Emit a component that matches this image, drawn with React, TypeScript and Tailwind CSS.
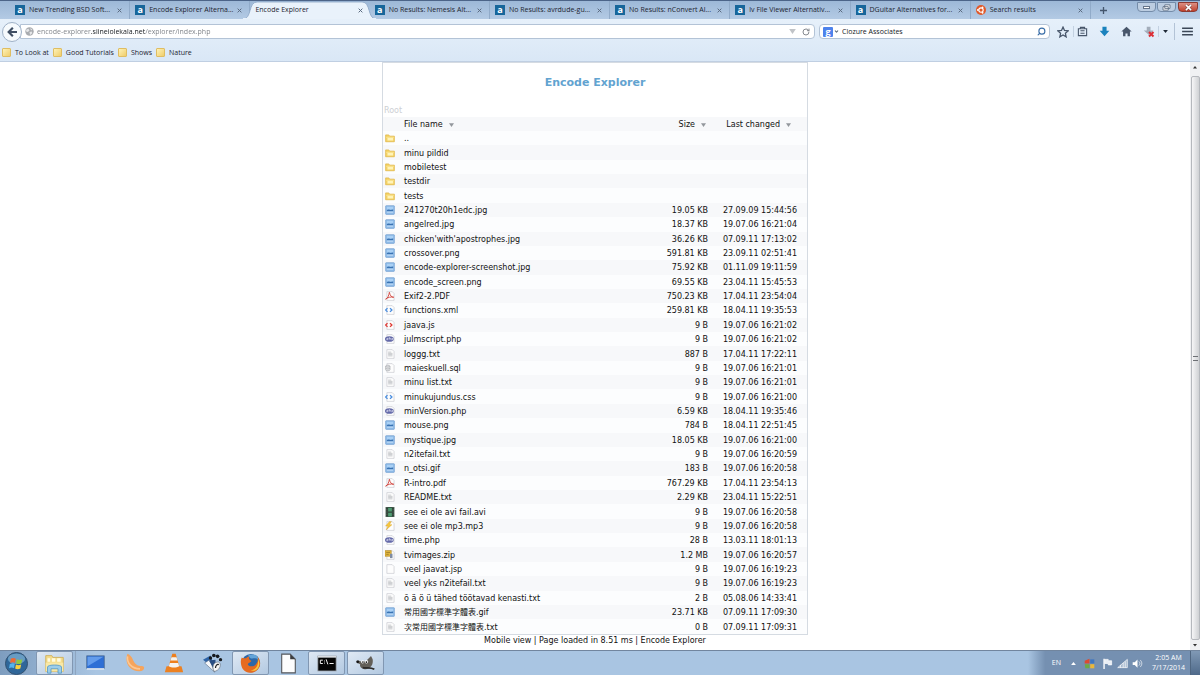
import type { ReactNode } from 'react';
import { ChevronDown, RotateCw, Search } from 'lucide-react';

type FileKind =
  | 'folder'
  | 'image'
  | 'pdf'
  | 'xml'
  | 'js'
  | 'php'
  | 'text'
  | 'sql'
  | 'video'
  | 'music'
  | 'zip'
  | 'blank';

interface FileEntry {
  kind: FileKind;
  name: string;
  size?: string;
  changed?: string;
}

interface BrowserTab {
  title: string;
  icon: 'alt' | 'ubuntu' | 'none';
  active?: boolean;
}

const tabs: BrowserTab[] = [
  { title: 'New Trending BSD Soft...', icon: 'alt' },
  { title: 'Encode Explorer Alterna...', icon: 'alt' },
  { title: 'Encode Explorer', icon: 'none', active: true },
  { title: 'No Results: Nemesis Alt...', icon: 'alt' },
  { title: 'No Results: avrdude-gu...', icon: 'alt' },
  { title: 'No Results: nConvert Al...', icon: 'alt' },
  { title: 'lv File Viewer Alternativ...', icon: 'alt' },
  { title: 'DGuitar Alternatives for...', icon: 'alt' },
  { title: 'Search results', icon: 'ubuntu' },
];

const bookmarks = ['To Look at', 'Good Tutorials', 'Shows', 'Nature'];

const files: FileEntry[] = [
  { kind: 'folder', name: '..' },
  { kind: 'folder', name: 'minu pildid' },
  { kind: 'folder', name: 'mobiletest' },
  { kind: 'folder', name: 'testdir' },
  { kind: 'folder', name: 'tests' },
  { kind: 'image', name: '241270t20h1edc.jpg', size: '19.05 KB', changed: '27.09.09 15:44:56' },
  { kind: 'image', name: 'angelred.jpg', size: '18.37 KB', changed: '19.07.06 16:21:04' },
  { kind: 'image', name: "chicken'with'apostrophes.jpg", size: '36.26 KB', changed: '07.09.11 17:13:02' },
  { kind: 'image', name: 'crossover.png', size: '591.81 KB', changed: '23.09.11 02:51:41' },
  { kind: 'image', name: 'encode-explorer-screenshot.jpg', size: '75.92 KB', changed: '01.11.09 19:11:59' },
  { kind: 'image', name: 'encode_screen.png', size: '69.55 KB', changed: '23.04.11 15:45:53' },
  { kind: 'pdf', name: 'Exif2-2.PDF', size: '750.23 KB', changed: '17.04.11 23:54:04' },
  { kind: 'xml', name: 'functions.xml', size: '259.81 KB', changed: '18.04.11 19:35:53' },
  { kind: 'js', name: 'jaava.js', size: '9 B', changed: '19.07.06 16:21:02' },
  { kind: 'php', name: 'julmscript.php', size: '9 B', changed: '19.07.06 16:21:02' },
  { kind: 'text', name: 'loggg.txt', size: '887 B', changed: '17.04.11 17:22:11' },
  { kind: 'sql', name: 'maieskuell.sql', size: '9 B', changed: '19.07.06 16:21:01' },
  { kind: 'text', name: 'minu list.txt', size: '9 B', changed: '19.07.06 16:21:01' },
  { kind: 'xml', name: 'minukujundus.css', size: '9 B', changed: '19.07.06 16:21:00' },
  { kind: 'php', name: 'minVersion.php', size: '6.59 KB', changed: '18.04.11 19:35:46' },
  { kind: 'image', name: 'mouse.png', size: '784 B', changed: '18.04.11 22:51:45' },
  { kind: 'image', name: 'mystique.jpg', size: '18.05 KB', changed: '19.07.06 16:21:00' },
  { kind: 'text', name: 'n2itefail.txt', size: '9 B', changed: '19.07.06 16:20:59' },
  { kind: 'image', name: 'n_otsi.gif', size: '183 B', changed: '19.07.06 16:20:58' },
  { kind: 'pdf', name: 'R-intro.pdf', size: '767.29 KB', changed: '17.04.11 23:54:13' },
  { kind: 'text', name: 'README.txt', size: '2.29 KB', changed: '23.04.11 15:22:51' },
  { kind: 'video', name: 'see ei ole avi fail.avi', size: '9 B', changed: '19.07.06 16:20:58' },
  { kind: 'music', name: 'see ei ole mp3.mp3', size: '9 B', changed: '19.07.06 16:20:58' },
  { kind: 'php', name: 'time.php', size: '28 B', changed: '13.03.11 18:01:13' },
  { kind: 'zip', name: 'tvimages.zip', size: '1.2 MB', changed: '19.07.06 16:20:57' },
  { kind: 'blank', name: 'veel jaavat.jsp', size: '9 B', changed: '19.07.06 16:19:23' },
  { kind: 'text', name: 'veel yks n2itefail.txt', size: '9 B', changed: '19.07.06 16:19:23' },
  { kind: 'text', name: 'õ ä ö ü tähed töötavad kenasti.txt', size: '2 B', changed: '05.08.06 14:33:41' },
  { kind: 'image', name: '常用國字標準字體表.gif', size: '23.71 KB', changed: '07.09.11 17:09:30' },
  { kind: 'text', name: '次常用國字標準字體表.txt', size: '0 B', changed: '07.09.11 17:09:31' },
];

function Sheet({ children }: { children?: ReactNode }) {
  return (
    <>
      <path d="M3 1h8.500l3 3v11H3z" fill="#fdfdfd" stroke="#c3c6cb" />
      {children}
    </>
  );
}

function FileIcon({ kind }: { kind: FileKind }) {
  return (
    <svg viewBox="0 0 16 16" className="block size-[10px]" aria-hidden="true">
      {kind === 'folder' && (
        <>
          <path d="M1 3h5l1.500 2H15v9H1z" fill="#f5d468" stroke="#dcae35" />
          <path d="M4 8h9v4H4z" fill="#fff3b8" />
          <path d="M2 7h12" stroke="#fdeea6" />
        </>
      )}
      {kind === 'image' && (
        <>
          <rect x="1" y="1" width="14" height="14" rx="1" fill="#8fbbe8" stroke="#6d9ace" />
          <path d="M3 3h10v4H3z" fill="#a9d0f5" />
          <path d="M3 8l3-1 3 1 4-1v3H3z" fill="#3a73b3" />
          <path d="M3 11.500h10" stroke="#b9d7f4" strokeWidth="2" />
        </>
      )}
      {kind === 'pdf' && (
        <Sheet>
          <path d="M1 13c3-1 5-5 6-11 1 5 3 8 7 8-5-1-9 0-13 3z" fill="none" stroke="#d24a43" strokeWidth="1.500" />
        </Sheet>
      )}
      {(kind === 'xml' || kind === 'js') && (
        <Sheet>
          <path
            d="M4 5L1 8l3 3M8 5l3 3-3 3"
            fill="none"
            stroke={kind === 'js' ? '#df3b35' : '#4a8ee0'}
            strokeWidth="2.200"
          />
        </Sheet>
      )}
      {kind === 'php' && (
        <Sheet>
          <ellipse cx="7" cy="8" rx="7" ry="4.500" fill="#6268a8" />
          <path d="M3 10V7h2v1.500H3M7 5v4M7 7h2v2M11 10V7h1.500v1.500H11" fill="none" stroke="#e2e4f5" />
        </Sheet>
      )}
      {kind === 'text' && (
        <Sheet>
          <path d="M5 5h5M5 7h7M5 9h7M5 11h7" stroke="#a9acb0" />
        </Sheet>
      )}
      {kind === 'sql' && (
        <Sheet>
          <path d="M1 5c0-2 7-2 7 0v6c0 2-7 2-7 0z" fill="#e4e5e7" stroke="#a4a7ac" />
          <path d="M1 5c0 2 7 2 7 0M1 8c0 2 7 2 7 0" fill="none" stroke="#a4a7ac" />
        </Sheet>
      )}
      {kind === 'video' && (
        <>
          <rect x="1" y="0" width="14" height="16" fill="#2f4238" />
          <path d="M5 1h6v6H5zM5 9h6v6H5z" fill="#4f9b71" />
          <path d="M3 0v16M13 0v16" stroke="#9bb0a4" strokeDasharray="1 2" />
        </>
      )}
      {kind === 'music' && (
        <Sheet>
          <path d="M7 1L1 8h4l-3 6 9-8H7l3-5z" fill="#f6c83e" stroke="#dba022" strokeWidth=".7" />
        </Sheet>
      )}
      {kind === 'zip' && (
        <Sheet>
          <path d="M0 1h10v9H0z" fill="#dfb53f" stroke="#b48a25" />
          <path d="M2 4h6M2 7h4" stroke="#8a6c22" />
          <path d="M8 6h4v7H8z" fill="#7e8ca4" />
        </Sheet>
      )}
      {kind === 'blank' && <Sheet />}
    </svg>
  );
}

function TabIcon({ icon }: { icon: BrowserTab['icon'] }) {
  if (icon === 'alt') {
    return (
      <span className="flex size-[10px] shrink-0 items-center justify-center bg-[#17669a] text-[9px] leading-[10px] font-bold text-white">
        a
      </span>
    );
  }
  if (icon === 'ubuntu') {
    return (
      <svg viewBox="0 0 16 16" className="size-[10px] shrink-0" aria-hidden="true">
        <circle cx="8" cy="8" r="8" fill="#e1592a" />
        <circle cx="8" cy="8" r="3.500" fill="none" stroke="#fff" strokeWidth="1.800" />
        <circle cx="3" cy="8" r="1.500" fill="#fff" />
        <circle cx="10.500" cy="3.700" r="1.500" fill="#fff" />
        <circle cx="10.500" cy="12.300" r="1.500" fill="#fff" />
      </svg>
    );
  }
  return null;
}

function CloseMark() {
  return (
    <svg viewBox="0 0 8 8" className="size-[5px]" aria-hidden="true">
      <path d="M1 1l6 6M7 1L1 7" stroke="#5b6b80" strokeWidth="1.600" />
    </svg>
  );
}

function TabStrip() {
  return (
    <div className="flex h-[19px] border-t border-[#4c6488] bg-linear-to-b from-[#9db8d7] to-[#b3cae4]">
      <div className="flex min-w-0 flex-1 pl-[10px]">
        {tabs.map((tab) => (
          <div
            key={tab.title}
            className={
              tab.active
                ? 'relative flex min-w-0 flex-1 items-center pr-[3px] pl-[5px]'
                : 'flex min-w-0 flex-1 items-center border-r border-[#91abc9] pr-[3px] pl-[5px]'
            }
          >
            {tab.active && (
              <svg
                viewBox="0 0 132 18"
                preserveAspectRatio="none"
                className="absolute top-0 -left-[7px] h-[18px] w-[calc(100%+14px)]"
                aria-hidden="true"
              >
                <path d="M0 18C9 18 5 1 14 1H118C127 1 123 18 132 18Z" fill="#e9f2fb" stroke="#8ba5c5" strokeWidth=".8" />
                <path d="M0 18H132" stroke="#e9f2fb" strokeWidth="2" />
              </svg>
            )}
            <button className="relative flex min-w-0 flex-1 items-center gap-1 text-left text-[#1c2430]">
              <TabIcon icon={tab.icon} />
              <span className="whitespace-nowrap">{tab.title}</span>
            </button>
            <button className="relative px-1" aria-label={`Close ${tab.title}`}>
              <CloseMark />
            </button>
          </div>
        ))}
      </div>
      <button className="flex w-[24px] items-center justify-center" aria-label="New tab">
        <svg viewBox="0 0 8 8" className="size-[7px]" aria-hidden="true">
          <path d="M4 0v8M0 4h8" stroke="#44566d" strokeWidth="1.500" />
        </svg>
      </button>
      <div className="flex items-start gap-px pt-px pr-[2px] pl-[22px]">
        <button
          className="flex h-[10px] w-[19px] items-center justify-center rounded-b-sm border border-[#748ca9] bg-[#bccde1]"
          aria-label="Minimize"
        >
          <span className="h-[3px] w-[7px] border border-[#66758a] bg-white" />
        </button>
        <button
          className="flex h-[10px] w-[19px] items-center justify-center rounded-b-sm border border-[#748ca9] bg-[#bccde1]"
          aria-label="Restore"
        >
          <svg viewBox="0 0 10 8" className="h-[7px] w-[9px]" aria-hidden="true">
            <path d="M3 1h6v4H3zM1 3h6v4H1z" fill="#fff" stroke="#5f6f85" />
          </svg>
        </button>
        <button
          className="ml-px flex h-[10px] w-[20px] items-center justify-center rounded-b-sm border border-[#8c3a32] bg-linear-to-b from-[#dc8f83] to-[#c0402c]"
          aria-label="Close window"
        >
          <svg viewBox="0 0 10 8" className="h-[7px] w-[9px]" aria-hidden="true">
            <path d="M2 1l6 6M8 1L2 7" stroke="#6b3a3a" strokeWidth="3" />
            <path d="M2 1l6 6M8 1L2 7" stroke="#fff" strokeWidth="1.800" />
          </svg>
        </button>
      </div>
    </div>
  );
}

function NavBar() {
  return (
    <div className="flex h-[25px] items-center pr-[7px]">
      <button
        className="relative z-10 ml-[2px] flex size-[20px] shrink-0 items-center justify-center rounded-full border border-[#9fb1c7] bg-[#f6fafd]"
        aria-label="Back"
      >
        <svg viewBox="0 0 12 12" className="size-[10px]" aria-hidden="true">
          <path d="M7 1L2 6l5 5M2 6h10" fill="none" stroke="#3f4e63" strokeWidth="2.600" />
        </svg>
      </button>
      <form className="-ml-[2px] flex h-[15px] min-w-0 flex-1 items-center rounded-r-sm border border-[#b3c3d6] bg-white pr-1 pl-1">
        <svg viewBox="0 0 16 16" className="size-[9px] shrink-0" aria-hidden="true">
          <circle cx="8" cy="8" r="7.500" fill="#a9acb0" />
          <path d="M2 5l4-2 2 3-3 3-3-1zM9 2l4 2-2 2zM8 9l4-1 1 3-4 3z" fill="#e6e7e9" />
        </svg>
        <input
          aria-label="Address"
          defaultValue="encode-explorer.siineiolekala.net/explorer/index.php"
          className="ml-[3px] min-w-0 flex-1 bg-[linear-gradient(90deg,#7b7f85_54px,#14181d_54px,#14181d_108px,#7b7f85_108px)] bg-clip-text text-transparent outline-none"
        />
        <svg viewBox="0 0 8 6" className="mr-[6px] h-[5px] w-[7px]" aria-hidden="true">
          <path d="M0 0h8L4 6z" fill="#c0c3c7" />
        </svg>
        <button type="button" aria-label="Reload">
          <RotateCw size={8} strokeWidth={3} className="text-[#85898f]" />
        </button>
      </form>
      <form className="ml-1 flex h-[15px] w-[231px] items-center rounded-sm border border-[#b3c3d6] bg-white px-[3px]">
        <span className="flex size-[10px] shrink-0 items-center justify-center rounded-[1px] bg-[#4d82ec] text-[9px] leading-[9px] font-bold text-white">
          g
        </span>
        <ChevronDown size={5} strokeWidth={5} className="ml-[1px] text-[#5d6b7c]" />
        <input
          aria-label="Search"
          defaultValue="Clozure Associates"
          className="ml-[3px] min-w-0 flex-1 text-[#14181d] outline-none"
        />
        <button type="button" aria-label="Go">
          <Search size={9} strokeWidth={3} className="-scale-x-100 text-[#3a6ea8]" />
        </button>
      </form>
      <div className="ml-[7px] flex items-center text-[#48566a]">
        <button aria-label="Bookmark this page">
          <svg viewBox="0 0 16 16" className="size-[12px]" aria-hidden="true">
            <path
              d="M8 1.500l2 4.500 4.800.5-3.600 3.200 1 4.800L8 12l-4.200 2.500 1-4.800L1.200 6.500 6 6z"
              fill="none"
              stroke="currentColor"
              strokeWidth="1.700"
            />
          </svg>
        </button>
        <button className="ml-[4px] border-l border-[#c3d1e1] pl-[3px]" aria-label="Bookmarks">
          <svg viewBox="0 0 16 16" className="size-[11px]" aria-hidden="true">
            <path d="M2 4h12v10H2zM5 4V2h6v2M5 7h6M5 10.500h6" fill="none" stroke="currentColor" strokeWidth="1.600" />
          </svg>
        </button>
        <button className="ml-[11px]" aria-label="Downloads">
          <svg viewBox="0 0 16 16" className="size-[11px]" aria-hidden="true">
            <path d="M5 1h6v6h4l-7 8-7-8h4z" fill="#1a82bd" />
          </svg>
        </button>
        <button className="ml-[11px]" aria-label="Home">
          <svg viewBox="0 0 16 16" className="size-[11px]" aria-hidden="true">
            <path d="M8 1l7.500 7H13v7H9.500v-4h-3v4H3V8H.5z" fill="currentColor" />
          </svg>
        </button>
        <button className="ml-[11px]" aria-label="Add-on">
          <svg viewBox="0 0 16 16" className="size-[12px]" aria-hidden="true">
            <path d="M5 1h5v5h4l-6 6-7-6h4z" fill="#a3adba" />
            <path d="M8 8l6 6M14 8l-6 6" stroke="#dc2f36" strokeWidth="2.600" />
          </svg>
        </button>
        <button className="ml-[3px] border-l border-[#c3d1e1] py-[4px] pl-[4px]" aria-label="More add-ons">
          <svg viewBox="0 0 8 5" className="h-[3px] w-[5px]" aria-hidden="true">
            <path d="M0 0h8L4 5z" fill="#1f2937" />
          </svg>
        </button>
        <button className="ml-[6px] border-l border-[#b3c3d6] py-[4px] pl-[7px]" aria-label="Menu">
          <svg viewBox="0 0 12 10" className="h-[9px] w-[11px]" aria-hidden="true">
            <path d="M0 1.500h12M0 5h12M0 8.500h12" stroke="#3b4757" strokeWidth="1.700" />
          </svg>
        </button>
      </div>
    </div>
  );
}

function BookmarksBar() {
  return (
    <nav className="flex h-[18px] items-center gap-[4px] border-b border-[#c0cfe2] pl-[2px]">
      {bookmarks.map((label) => (
        <a key={label} href="#" className="flex items-center gap-[4px] text-[#1c2430]">
          <span className="size-[9px] rounded-[1px] border border-[#dfbd62] bg-linear-to-br from-[#fdf2b5] to-[#f0cd69]" />
          {label}
        </a>
      ))}
    </nav>
  );
}

function SortHeader({ label }: { label: string }) {
  return (
    <a href="#" className="inline-flex items-center gap-[6px]">
      {label}
      <svg viewBox="0 0 8 6" className="h-[4px] w-[5px]" aria-hidden="true">
        <path d="M0 0h8L4 6z" fill="#93979c" />
      </svg>
    </a>
  );
}

function FileTable() {
  return (
    <table className="h-full w-full border-collapse text-[#111]">
      <thead>
        <tr className="h-[14px] bg-[#f7f8fa]">
          <th className="w-[21px] p-0" aria-label="Type" />
          <th className="p-0 pt-[2px] text-left font-normal">
            <SortHeader label="File name" />
          </th>
          <th className="p-0 pt-[2px] pr-[2px] text-right font-normal">
            <SortHeader label="Size" />
          </th>
          <th className="w-[99px] p-0 pt-[2px] pr-[16px] text-right font-normal">
            <SortHeader label="Last changed" />
          </th>
        </tr>
      </thead>
      <tbody>
        {files.map((file) => (
          <tr key={file.name} className="odd:bg-[#fcfdfe] even:bg-[#f7f8fa]">
            <td className="p-0 pl-[2px]">
              <FileIcon kind={file.kind} />
            </td>
            <td className="p-0 pt-[2px]">
              <a href="#">{file.name}</a>
            </td>
            <td className="p-0 pt-[2px] text-right">{file.size}</td>
            <td className="p-0 pt-[2px] pr-[10px] text-right">{file.changed}</td>
          </tr>
        ))}
      </tbody>
    </table>
  );
}

function ScrollBar() {
  return (
    <div className="flex w-[10px] shrink-0 flex-col items-center bg-[#f0f1f3]">
      <svg viewBox="0 0 10 10" className="size-[10px]" aria-hidden="true">
        <path d="M3 6.500h4L5 4z" fill="#333" />
      </svg>
      <div className="mt-[4px] flex w-[9px] flex-1 items-center justify-center rounded-[2px] border border-[#b5b8bd] bg-linear-to-r from-[#f6f6f7] to-[#cfd1d4]">
        <span className="h-[5px] w-[5px] border-y border-[#6d7075]" />
      </div>
      <svg viewBox="0 0 10 10" className="size-[10px]" aria-hidden="true">
        <path d="M3 4h4L5 6.500z" fill="#333" />
      </svg>
    </div>
  );
}

function StartOrb() {
  return (
    <svg viewBox="0 0 24 24" className="size-[23px]" aria-hidden="true">
      <circle cx="12" cy="12" r="11.500" fill="#2f6699" stroke="#32506f" />
      <ellipse cx="12" cy="7" rx="9" ry="5.500" fill="#80b3d4" opacity=".7" />
      <path d="M6 7c2-1.200 3.500-1 5.300 0l-.8 4.500c-1.800-1-3.300-1-5.200 0z" fill="#ed6a33" />
      <path d="M12.300 7.500c2 1 3.700 1 5.700 0l-.9 4.400c-2 1-3.600 1-5.500 0z" fill="#92c83e" />
      <path d="M5 12.600c1.900-1 3.400-1 5.200 0l-.8 4.400c-1.800-1-3.300-1-5.200 0z" fill="#55b4ec" />
      <path d="M11.400 13c1.900 1 3.500 1 5.500 0l-.9 4.300c-2 1-3.600 1-5.400 0z" fill="#fbd13b" />
    </svg>
  );
}

function ExplorerIcon() {
  return (
    <svg viewBox="0 0 24 24" className="size-[21px]" aria-hidden="true">
      <path d="M2 3h7l1 2h12v16H2z" fill="#f4dc8b" stroke="#cfae55" />
      <path d="M4 6h3v4H4zM9 6h4v4H9zM15 6h4v4h-4z" fill="#fffbe0" />
      <path d="M2 11h20v10H2z" fill="#f9e8a6" />
      <path d="M4 23v-7c0-3 16-3 16 0v7h-4v-5H8v5z" fill="#9ccdea" stroke="#5d9dc6" />
    </svg>
  );
}

function DesktopIcon() {
  return (
    <svg viewBox="0 0 24 20" className="h-[16px] w-[19px]" aria-hidden="true">
      <rect x="1" y="1" width="22" height="16" fill="#2e6fd5" stroke="#43648f" />
      <path d="M2 2h20L2 14z" fill="#639cec" />
      <path d="M1 17.500h22" stroke="#dce6f2" strokeWidth="2" />
    </svg>
  );
}

function BananaIcon() {
  return (
    <svg viewBox="0 0 24 24" className="size-[20px]" aria-hidden="true">
      <path d="M3 1c-4 10 2 21 14 21 4 0 6-2 6-5-2-3-5 0-9-3C9 11 10 4 3 1z" fill="#f6a45c" />
      <path d="M3 4c-1 8 5 15 15 15" fill="none" stroke="#fbc793" strokeWidth="2" />
    </svg>
  );
}

function VlcIcon() {
  return (
    <svg viewBox="0 0 24 24" className="size-[20px]" aria-hidden="true">
      <path d="M3 16h18l2 7H1z" fill="#ec8122" />
      <path d="M10 1h4l5 17c-3 2.500-11 2.500-14 0z" fill="#ee7f1d" />
      <path d="M9 5h6l1.200 4H7.800zM7 12h10l1.200 4c-3 2-9.500 2-12.400 0z" fill="#f6f3ef" />
    </svg>
  );
}

function PawIcon() {
  return (
    <svg viewBox="0 0 24 24" className="size-[20px]" aria-hidden="true">
      <path d="M0 8l9-5 6 17z" fill="#2f65a8" />
      <path d="M2 12l6-4 6 15z" fill="#f5f7fa" stroke="#54677f" strokeWidth=".7" />
      <path d="M7 9l8-1 0 14z" fill="#2b4f83" />
      <path d="M13 22c-3-7 1-12 6-11 4 2 1 11-6 11z" fill="#f7f7f7" stroke="#65717f" strokeWidth=".8" />
      <path d="M15 18c0-3 2-5 4-4" fill="none" stroke="#222" strokeWidth="1.500" />
      <circle cx="9" cy="6" r="2" fill="#16191d" />
      <circle cx="13" cy="3" r="2.200" fill="#16191d" />
      <circle cx="17.500" cy="4" r="2.200" fill="#16191d" />
      <circle cx="21" cy="8" r="2" fill="#16191d" />
    </svg>
  );
}

function FirefoxIcon() {
  return (
    <svg viewBox="0 0 24 24" className="size-[21px]" aria-hidden="true">
      <circle cx="12.500" cy="11.500" r="10.500" fill="#2d68a9" />
      <path d="M9 3c5-3 11-1 12 4-4-2-6 0-9-1z" fill="#63a4d8" />
      <path d="M2 5c1 1 3 1 5 1 1-1 2-2 4-2-2 2 0 4 2 5-1 2-4 2-4 4 1 3 7 3 9 0 3-3 3-7 2-9 4 5 4 11 0 15-5 5-13 5-17-1C1 14 0 9 2 5z" fill="#e66b20" />
      <path d="M20 6c2 7-1 13-8 14 8 2 13-6 8-14z" fill="#f9c53c" />
    </svg>
  );
}

function DocumentIcon() {
  return (
    <svg viewBox="0 0 20 24" className="h-[21px] w-[17px]" aria-hidden="true">
      <path d="M2 1h10l6 6v16H2z" fill="#fdfdfd" stroke="#55585c" strokeWidth="1.300" />
      <path d="M12 1l6 6h-6z" fill="#3b3d40" />
    </svg>
  );
}

function ConsoleIcon() {
  return (
    <svg viewBox="0 0 24 20" className="h-[17px] w-[20px]" aria-hidden="true">
      <rect x="1" y="1" width="22" height="18" fill="#050505" stroke="#a5acb5" />
      <path d="M1 2h22" stroke="#d9dde2" strokeWidth="2" />
      <path d="M7 6H4v4h3M9 6.500v1M9 9v1M11 5l2 6M15 10h5" fill="none" stroke="#f0f0f0" strokeWidth="1.200" />
    </svg>
  );
}

function GimpIcon() {
  return (
    <svg viewBox="0 0 24 20" className="h-[17px] w-[20px]" aria-hidden="true">
      <path d="M2 6l5 2 5-1 6-6 2 4c1 6-2 11-8 12-5 0-8-3-7-6L1 9z" fill="#635f58" />
      <circle cx="8" cy="8" r="1.900" fill="#fff" />
      <circle cx="12.500" cy="8" r="2.100" fill="#fff" />
      <circle cx="8.300" cy="8.300" r="1" fill="#111" />
      <circle cx="12.500" cy="8.300" r="1.100" fill="#111" />
      <circle cx="2" cy="8" r="1.700" fill="#171717" />
      <path d="M8 15c5 1 9-1 14 2" fill="none" stroke="#2d2b29" strokeWidth="2" />
    </svg>
  );
}

interface TaskButtonProps {
  label: string;
  open?: boolean;
  children: ReactNode;
}

function TaskButton({ label, open, children }: TaskButtonProps) {
  return (
    <button
      aria-label={label}
      className={
        open
          ? 'flex h-full w-[37px] items-center justify-center rounded-[2px] border border-[#8197b2] bg-linear-to-br from-[#dfe9f4] to-[#b3c9e1]'
          : 'flex h-full w-[39px] items-center justify-center'
      }
    >
      {children}
    </button>
  );
}

function TaskBar() {
  return (
    <footer className="flex h-[25px] shrink-0 items-stretch border-t border-[#71859e] bg-linear-to-r from-[#7e9dbf] via-[#a9c5e2] via-8% to-[#a9c5e2]">
      <button className="flex w-[33px] items-center justify-center" aria-label="Start">
        <StartOrb />
      </button>
      <div className="flex items-center pl-[3px]">
        <div className="flex h-full border-r border-[#8ea5c0] pr-[2px]">
          <TaskButton label="Explorer" open>
            <ExplorerIcon />
          </TaskButton>
        </div>
        <TaskButton label="Desktop">
          <DesktopIcon />
        </TaskButton>
        <TaskButton label="Banana">
          <BananaIcon />
        </TaskButton>
        <TaskButton label="VLC">
          <VlcIcon />
        </TaskButton>
        <TaskButton label="Solitaire">
          <PawIcon />
        </TaskButton>
        <TaskButton label="Firefox" open>
          <FirefoxIcon />
        </TaskButton>
        <TaskButton label="LibreOffice">
          <DocumentIcon />
        </TaskButton>
        <div className="flex h-full gap-[2px]">
          <TaskButton label="Command prompt" open>
            <ConsoleIcon />
          </TaskButton>
          <TaskButton label="GIMP" open>
            <GimpIcon />
          </TaskButton>
        </div>
      </div>
      <div className="ml-auto flex items-center bg-linear-to-r from-[#a9c5e2] to-[#7590b1] to-10% pl-[24px] text-white">
        <span>EN</span>
        <svg viewBox="0 0 8 5" className="ml-[10px] h-[3px] w-[5px]" aria-hidden="true">
          <path d="M0 5h8L4 0z" fill="#fff" />
        </svg>
        <svg viewBox="0 0 16 16" className="ml-[8px] size-[11px]" aria-hidden="true">
          <path d="M1 4l7-3v7H1z" fill="#dc4a31" />
          <path d="M9 2h6v6H9z" fill="#3f76c0" />
          <path d="M1 9h7v6H2z" fill="#6eaa43" />
          <path d="M9 9h6v6H9z" fill="#eab73a" />
        </svg>
        <svg viewBox="0 0 16 16" className="ml-[7px] size-[11px]" aria-hidden="true">
          <path d="M3 1v15" stroke="#fff" strokeWidth="2" />
          <path d="M4 2h5v2h5v6H9V8H4z" fill="#e9eef5" stroke="#fff" />
        </svg>
        <svg viewBox="0 0 16 16" className="ml-[4px] size-[11px]" aria-hidden="true">
          <path d="M1 14L15 2v12z" fill="#a9bbd0" stroke="#fff" />
          <path d="M5 14v-4M9 14V7M12 14V5" stroke="#fff" />
        </svg>
        <svg viewBox="0 0 16 16" className="ml-[4px] size-[11px]" aria-hidden="true">
          <path d="M1 6h3l4-4v12l-4-4H1z" fill="#fff" />
          <path d="M10 5c2 2 2 4 0 6M12 3c3 3 3 7 0 10" fill="none" stroke="#fff" />
        </svg>
        <div className="ml-[8px] w-[35px] text-center leading-[10px] whitespace-nowrap">
          <div>2:05 AM</div>
          <div>7/17/2014</div>
        </div>
        <button
          className="ml-[4px] h-full w-[10px] border-l border-[#4f6680] bg-linear-to-b from-[#8099b5] to-[#4f6a8a]"
          aria-label="Show desktop"
        />
      </div>
    </footer>
  );
}

export default function App() {
  return (
    <div className="flex h-screen flex-col overflow-hidden bg-white font-['Open_Sans',sans-serif] text-[7px] leading-[12px]">
      <header className="shrink-0 bg-linear-to-b from-[#ecf4fc] to-[#d9e7f6]">
        <TabStrip />
        <NavBar />
        <BookmarksBar />
      </header>

      <div className="flex min-h-0 flex-1">
        <main className="flex min-w-0 flex-1 flex-col items-center font-['DejaVu_Sans','Noto_Sans_CJK_TC',sans-serif] text-[8px] leading-[12px]">
          <div className="flex min-h-0 w-full max-w-[426px] flex-1 flex-col border border-[#d5dbe2]">
            <h1 className="pt-[12px] text-center text-[11px] leading-[16px] font-bold text-[#62a3d0]">
              <a href="#">Encode Explorer</a>
            </h1>
            <div className="mt-[14px] pl-px text-[#cdd0d4]">
              <a href="#">Root</a>
            </div>
            <div className="min-h-0 flex-1">
              <FileTable />
            </div>
          </div>
          <p className="pb-[3px] text-[#111]">
            <a href="#">Mobile view</a> | Page loaded in 8.51 ms | <a href="#">Encode Explorer</a>
          </p>
        </main>
        <ScrollBar />
      </div>

      <TaskBar />
    </div>
  );
}
